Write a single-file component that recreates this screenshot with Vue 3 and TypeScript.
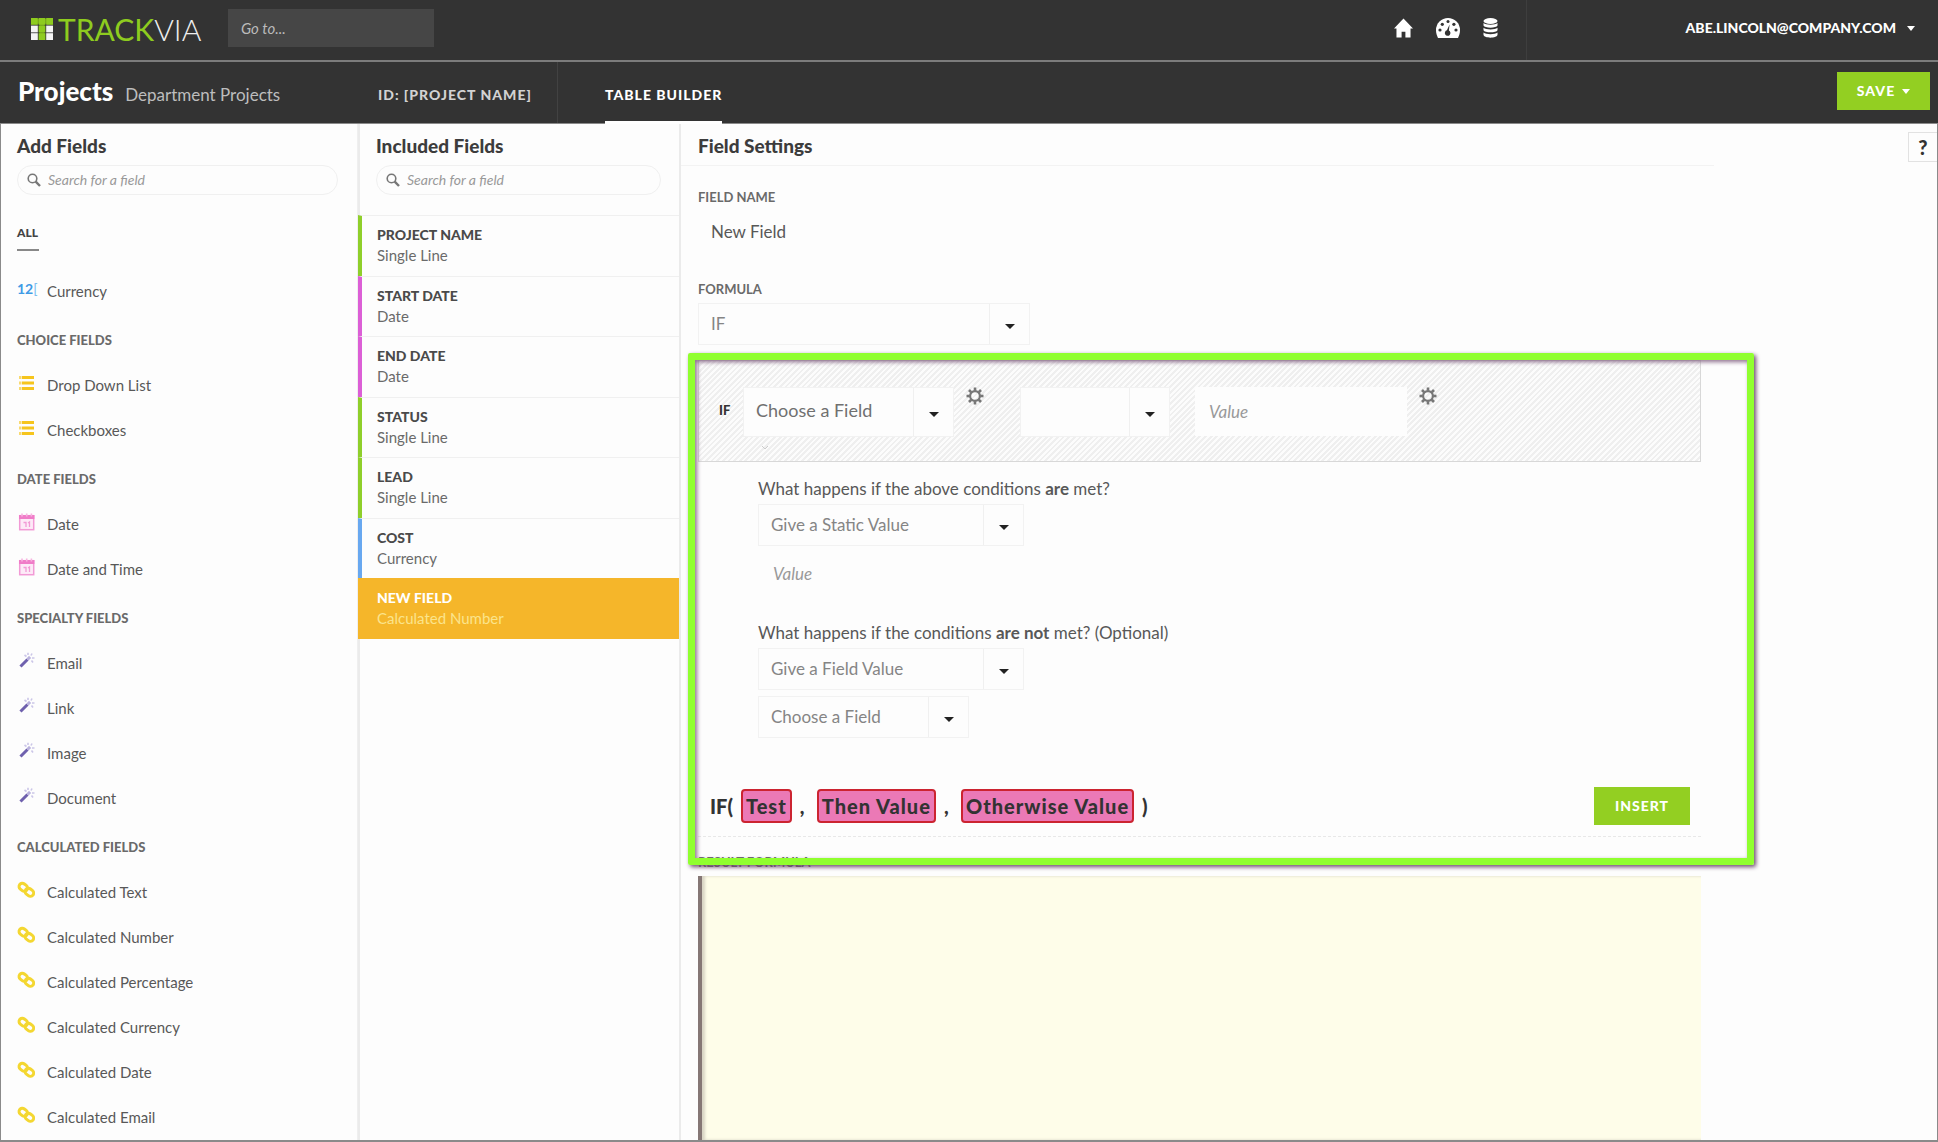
<script setup lang="ts">
import { ref } from 'vue'

type IconName = 'number' | 'list' | 'calendar' | 'wand' | 'link'

interface FieldGroup {
  title: string
  icon: IconName
  items: string[]
}

interface IncludedField {
  name: string
  type: string
  tone: 'green' | 'magenta' | 'blue' | 'active'
}

const groups: FieldGroup[] = [
  { title: 'Choice Fields', icon: 'list', items: ['Drop Down List', 'Checkboxes'] },
  { title: 'Date Fields', icon: 'calendar', items: ['Date', 'Date and Time'] },
  { title: 'Specialty Fields', icon: 'wand', items: ['Email', 'Link', 'Image', 'Document'] },
  {
    title: 'Calculated Fields',
    icon: 'link',
    items: [
      'Calculated Text',
      'Calculated Number',
      'Calculated Percentage',
      'Calculated Currency',
      'Calculated Date',
      'Calculated Email',
    ],
  },
]

const included: IncludedField[] = [
  { name: 'Project Name', type: 'Single Line', tone: 'green' },
  { name: 'Start Date', type: 'Date', tone: 'magenta' },
  { name: 'End Date', type: 'Date', tone: 'magenta' },
  { name: 'Status', type: 'Single Line', tone: 'green' },
  { name: 'Lead', type: 'Single Line', tone: 'green' },
  { name: 'Cost', type: 'Currency', tone: 'blue' },
  { name: 'New Field', type: 'Calculated Number', tone: 'active' },
]

const fieldName = ref('New Field')
const gearTeeth = [0, 45, 90, 135, 180, 225, 270, 315]
</script>

<template>
  <div class="app">
    <header class="topbar">
      <a class="logo" href="#" aria-label="TrackVia">
        <svg class="logo-mark" viewBox="0 0 22 22" aria-hidden="true">
          <path d="M0 3.300H22M11 0V22" stroke="#6a9618" stroke-width="5" />
          <g fill="#8ecb1f">
            <rect x="0" y="0" width="6.800" height="6.800" /><rect x="7.600" y="0" width="6.800" height="6.800" />
            <rect x="15.200" y="0" width="6.800" height="6.800" /><rect x="7.600" y="7.600" width="6.800" height="6.800" />
            <rect x="7.600" y="15.200" width="6.800" height="6.800" />
          </g>
          <g fill="#f4f4f4">
            <rect x="0" y="7.600" width="6.800" height="6.800" /><rect x="15.200" y="7.600" width="6.800" height="6.800" />
            <rect x="0" y="15.200" width="6.800" height="6.800" /><rect x="15.200" y="15.200" width="6.800" height="6.800" />
          </g>
        </svg>
        <span class="logo-track">TRACK</span><span class="logo-via">VIA</span>
      </a>
      <input class="goto" type="text" placeholder="Go to..." aria-label="Go to" />
      <nav class="top-icons" aria-label="Main">
        <a href="#" aria-label="Home">
          <svg width="19" height="20" viewBox="0 0 20 20"><path fill="#fff" d="M10 0 20 10.5h-2.600V20H12v-6H8v6H2.600v-9.500H0L6 4.200z" /></svg>
        </a>
        <a href="#" aria-label="Dashboard">
          <svg width="24" height="20" viewBox="0 0 24 20">
            <path fill="#fff" d="M12 0a12 12 0 0 0-12 12c0 3 .8 5.500 2 8h20c1.200-2.500 2-5 2-8A12 12 0 0 0 12 0z" />
            <g fill="#333">
              <circle cx="4" cy="12" r="1.600" /><circle cx="6.300" cy="6.300" r="1.600" /><circle cx="12" cy="3.600" r="1.500" />
              <circle cx="17.900" cy="6.300" r="1.600" /><circle cx="20" cy="12" r="1.600" />
              <path d="M13.600 6.500 12.900 12.500a2.800 2.800 0 1 1-2-.2z" />
            </g>
          </svg>
        </a>
        <a href="#" aria-label="Data">
          <svg width="15" height="20" viewBox="0 0 15 20">
            <g fill="#fff">
              <ellipse cx="7.500" cy="3" rx="7" ry="3" />
              <path d="M.5 5c2.500 2.200 11.500 2.200 14 0v2.600c-1 2.700-13 2.700-14 0z" />
              <path d="M.5 9.800c2.500 2.200 11.500 2.200 14 0v2.400c-1 2.700-13 2.700-14 0z" />
              <path d="M.5 14.600c2.500 2.200 11.500 2.200 14 0V17c-1 3.500-13 3.500-14 0z" />
            </g>
          </svg>
        </a>
      </nav>
      <button class="account" type="button">ABE.LINCOLN@COMPANY.COM <i class="caret"></i></button>
    </header>

    <div class="subbar">
      <div class="title">
        <h1>Projects</h1>
        <span>Department Projects</span>
      </div>
      <nav class="tabs" aria-label="Table">
        <a class="tab record" href="#">ID: [PROJECT NAME]</a>
        <a class="tab current" href="#">TABLE BUILDER</a>
      </nav>
      <button class="green-button save" type="button">SAVE <i class="caret"></i></button>
    </div>

    <main class="columns">
      <aside class="add-fields">
        <h2>Add Fields</h2>
        <label class="search">
          <svg width="14" height="14" viewBox="0 0 14 14" aria-hidden="true"><circle cx="5.500" cy="5.500" r="4.300" fill="none" stroke="#777" stroke-width="1.600" /><path d="m8.700 8.700 4.300 4.300" stroke="#777" stroke-width="2.400" /></svg>
          <input type="text" placeholder="Search for a field" aria-label="Search fields to add" />
        </label>
        <a class="all" href="#">ALL</a>
        <ul>
          <li><span class="icon-123" aria-hidden="true"><b>12</b>[</span>Currency</li>
        </ul>
        <section v-for="group in groups" :key="group.title">
          <h3>{{ group.title }}</h3>
          <ul>
            <li v-for="item in group.items" :key="item">
              <svg v-if="group.icon === 'list'" class="field-icon" viewBox="0 0 18 18" aria-hidden="true">
                <g fill="#f6c51d"><rect x="5" y="2" width="12" height="3" /><rect x="5" y="7.500" width="12" height="3" /><rect x="5" y="13" width="12" height="3" /></g>
                <g fill="#f9da70"><rect x="2" y="2" width="2.500" height="3" /><rect x="2" y="7.500" width="2.500" height="3" /><rect x="2" y="13" width="2.500" height="3" /></g>
              </svg>
              <svg v-else-if="group.icon === 'calendar'" class="field-icon" viewBox="0 0 18 18" aria-hidden="true">
                <rect x="2.700" y="2.700" width="14" height="14" fill="#fdeaf7" stroke="#f29ad6" stroke-width="1.500" />
                <path d="M2 2h15.400v4H2z" fill="#f07cc8" />
                <path d="M5 .5v3M9.700 .5v3M14.400 .5v3" stroke="#f7b3e0" stroke-width="1.600" />
                <path d="M6.500 9.500H9V14M11 10l1.500-1V14" stroke="#f29ad6" stroke-width="1.300" fill="none" />
              </svg>
              <svg v-else-if="group.icon === 'wand'" class="field-icon" viewBox="0 0 18 18" aria-hidden="true">
                <path d="M3.500 14.500 10.500 7.500" stroke="#6f61ae" stroke-width="3" />
                <path d="m10.500 7.500 2.600-2.600" stroke="#b9b2dd" stroke-width="3" />
                <path d="M7.500 3 9.500 4.500M11 .8V3M15 1.500 14 3.500M14.500 8.500l1.500 2M15 6H17.500" stroke="#cbc6e8" stroke-width="1.600" />
              </svg>
              <svg v-else class="field-icon" viewBox="0 0 18 18" aria-hidden="true">
                <g fill="none" stroke="#f4d731" stroke-width="3">
                  <rect x="-4.500" y="-3.300" width="9" height="6.600" rx="3.300" transform="translate(6.300 6.300) rotate(38)" />
                  <rect x="-4.500" y="-3.300" width="9" height="6.600" rx="3.300" transform="translate(12.400 11.300) rotate(38)" />
                </g>
              </svg>
              {{ item }}
            </li>
          </ul>
        </section>
      </aside>

      <section class="included">
        <div class="included-head">
          <h2>Included Fields</h2>
          <label class="search">
            <svg width="14" height="14" viewBox="0 0 14 14" aria-hidden="true"><circle cx="5.500" cy="5.500" r="4.300" fill="none" stroke="#777" stroke-width="1.600" /><path d="m8.700 8.700 4.300 4.300" stroke="#777" stroke-width="2.400" /></svg>
            <input type="text" placeholder="Search for a field" aria-label="Search included fields" />
          </label>
        </div>
        <ul class="included-list">
          <li v-for="field in included" :key="field.name" :class="field.tone">
            <strong>{{ field.name }}</strong>
            <span>{{ field.type }}</span>
          </li>
        </ul>
      </section>

      <section class="settings">
        <button class="help" type="button" aria-label="Help">?</button>
        <h2>Field Settings</h2>
        <div class="settings-body">
          <label class="caption" for="field-name">FIELD NAME</label>
          <input id="field-name" v-model="fieldName" class="name-input" type="text" />
          <label class="caption" for="formula">FORMULA</label>
          <div class="select formula-select">
            <select id="formula"><option>IF</option></select>
          </div>

          <div class="builder">
            <div class="condition">
              <span class="if">IF</span>
              <div class="select tall choose">
                <select aria-label="Condition field"><option>Choose a Field</option></select>
              </div>
              <button class="gear" type="button" aria-label="Field options">
                <svg width="18" height="18" viewBox="-9 -9 18 18"><circle r="4.900" fill="none" stroke="#777" stroke-width="2.200" /><rect v-for="a in gearTeeth" :key="a" x="-1.300" y="-8.500" width="2.600" height="3.200" fill="#777" :transform="`rotate(${a})`" /></svg>
              </button>
              <div class="select tall operator">
                <select aria-label="Operator"><option></option></select>
              </div>
              <input class="condition-value" type="text" placeholder="Value" aria-label="Condition value" />
              <button class="gear" type="button" aria-label="Value options">
                <svg width="18" height="18" viewBox="-9 -9 18 18"><circle r="4.900" fill="none" stroke="#777" stroke-width="2.200" /><rect v-for="a in gearTeeth" :key="a" x="-1.300" y="-8.500" width="2.600" height="3.200" fill="#777" :transform="`rotate(${a})`" /></svg>
              </button>
              <svg class="chevron" width="8" height="5" viewBox="0 0 8 5" aria-hidden="true"><path d="m1 1 3 3 3-3" fill="none" stroke="#ccc" /></svg>
            </div>

            <div class="outcome">
              <label for="met">What happens if the above conditions <b>are</b> met?</label>
              <div class="select wide"><select id="met"><option>Give a Static Value</option></select></div>
              <input class="plain-value" type="text" placeholder="Value" aria-label="Static value" />
            </div>
            <div class="outcome">
              <label for="unmet">What happens if the conditions <b>are not</b> met? (Optional)</label>
              <div class="select wide"><select id="unmet"><option>Give a Field Value</option></select></div>
              <div class="select choose"><select aria-label="Field value"><option>Choose a Field</option></select></div>
            </div>

            <div class="expression">
              <span>IF(</span>
              <button class="chip" type="button">Test</button>
              <span class="comma">,</span>
              <button class="chip" type="button">Then Value</button>
              <span class="comma">,</span>
              <button class="chip" type="button">Otherwise Value</button>
              <span>)</span>
              <button class="green-button insert" type="button">INSERT</button>
            </div>
            <div class="highlight"></div>
          </div>

          <label class="caption result-caption" for="result-formula">RESULT FORMULA</label>
          <textarea id="result-formula"></textarea>
        </div>
      </section>
    </main>
  </div>
</template>

<style>
body {
  margin: 0;
  background: #fdfdfd;
}
</style>

<style scoped>
* {
  box-sizing: border-box;
}
.app {
  display: flex;
  flex-direction: column;
  min-height: 100vh;
  font: 15px/20px Lato, 'Liberation Sans', sans-serif;
  color: #585858;
  background: #fdfdfd;
}
h1, h2, h3, ul {
  margin: 0;
  padding: 0;
}
ul {
  list-style: none;
}
a {
  color: inherit;
  text-decoration: none;
}
input, select, textarea, button {
  margin: 0;
  padding: 0;
  border: 0;
  border-radius: 0;
  font: inherit;
  color: inherit;
  background: none;
  outline: 0;
}
input::placeholder {
  color: #999;
  font-style: italic;
  opacity: 1;
}
.caret {
  display: inline-block;
  border: 4px solid transparent;
  border-top: 5px solid #fff;
  border-bottom: 0;
}

/* Top bar */
.topbar {
  display: flex;
  align-items: center;
  height: 62px;
  padding-left: 31px;
  background: #333;
  border-bottom: 2px solid #7c7c7c;
}
.logo {
  display: flex;
  align-items: center;
  width: 197px;
  height: 60px;
  padding-bottom: 2px;
  font-size: 30px;
  line-height: 58px;
}
.logo-mark {
  width: 22px;
  height: 22px;
  margin-right: 5px;
}
.logo-track {
  color: #8ecb1f;
}
.logo-via {
  color: #eee;
  font-weight: 300;
}
.goto {
  width: 206px;
  height: 38px;
  margin-bottom: 4px;
  padding: 0 13px;
  background: #464646;
  color: #ddd;
}
.goto::placeholder {
  color: #bbb;
}
.top-icons {
  display: flex;
  align-items: center;
  gap: 23px;
  height: 60px;
  margin-left: auto;
  padding: 0 28px 4px 0;
  border-right: 1px solid #3e3e3e;
}
.top-icons svg {
  display: block;
}
.account {
  display: flex;
  align-items: center;
  justify-content: flex-end;
  gap: 11px;
  width: 411px;
  padding: 0 23px 4px 0;
  color: #fff;
  font-size: 14px;
  font-weight: 900;
}

/* Second bar */
.subbar {
  display: flex;
  height: 62px;
  background: #333;
  border-bottom: 1px solid #8a8a8a;
}
.title {
  display: flex;
  align-items: baseline;
  gap: 12px;
  width: 358px;
  padding-left: 18px;
  color: #bdbdbd;
  font-size: 17px;
  line-height: 58px;
}
.title h1 {
  color: #fff;
  font-size: 26px;
  font-weight: 900;
}
.tabs {
  display: flex;
  gap: 47px;
  font-size: 14px;
  font-weight: 900;
  line-height: 66px;
  letter-spacing: 1px;
}
.record {
  width: 200px;
  padding-left: 20px;
  color: #d2d2d2;
  border-right: 1px solid #424242;
}
.current {
  height: 62px;
  color: #fff;
  border-bottom: 3px solid #fff;
}
.green-button {
  background: #93cf22;
  color: #fff;
  font-size: 14px;
  font-weight: 900;
  letter-spacing: 1px;
}
.save {
  display: flex;
  align-items: center;
  justify-content: center;
  gap: 7px;
  width: 93px;
  height: 38px;
  margin: 10px 8px 0 auto;
}

/* Columns */
.columns {
  display: grid;
  grid-template-columns: 357px 323px 1fr;
  flex: 1;
  border: 1px solid #8a8a8a;
  border-width: 0 1px 2px;
}
h2 {
  color: #3c3c3c;
  font-size: 19px;
  font-weight: 900;
  line-height: 24px;
}
.add-fields {
  padding: 10px 19px 0 16px;
  border-right: 1px solid #efefef;
}
.search {
  display: flex;
  align-items: center;
  gap: 7px;
  height: 30px;
  margin-top: 7px;
  padding-left: 9px;
  border: 1px solid #f0f0f0;
  border-radius: 15px;
}
.search input {
  flex: 1;
  min-width: 0;
  font-size: 14px;
}
.all {
  display: block;
  width: 22px;
  margin: 25px 0 17px;
  padding-bottom: 3px;
  color: #444;
  font-size: 12px;
  font-weight: 900;
  line-height: 26px;
  border-bottom: 2px solid #888;
  white-space: nowrap;
}
h3 {
  margin: 17px 0 12px;
  color: #6a6a6a;
  font-size: 13px;
  font-weight: 900;
  line-height: 20px;
  text-transform: uppercase;
}
.add-fields li {
  display: flex;
  align-items: center;
  gap: 12px;
  height: 45px;
}
.field-icon {
  width: 18px;
  height: 18px;
  margin-bottom: 4px;
}
.icon-123 {
  width: 18px;
  margin-bottom: 4px;
  color: #7cc0f0;
  font-size: 14px;
  line-height: 18px;
}
.icon-123 b {
  color: #3f9be6;
}

.included {
  border-left: 2px solid #ebebeb;
  border-right: 2px solid #ebebeb;
}
.included-head {
  padding: 10px 18px 20px 16px;
}
.included-list {
  display: grid;
  grid-auto-rows: 1fr;
  height: 424px;
  margin-left: -2px;
}
.included-list li {
  display: flex;
  flex-direction: column;
  padding: 9px 0 0 15px;
  border-left: 4px solid;
  border-top: 1px solid #f0f0f0;
}
.included-list strong {
  color: #4a4a4a;
  font-size: 14px;
  font-weight: 900;
  text-transform: uppercase;
}
.included-list span {
  color: #6a6a6a;
  font-size: 15px;
}
.included-list .green {
  border-left-color: #8fcf2b;
}
.included-list .magenta {
  border-left-color: #dc5fd6;
}
.included-list .blue {
  border-left-color: #68a8f0;
}
.included-list .active {
  background: #f5b62a;
  border-color: #f5b62a;
}
.included-list .active strong {
  color: #fff;
}
.included-list .active span {
  color: #fbe48c;
}

/* Settings */
.settings {
  position: relative;
  min-width: 0;
  display: flex;
  flex-direction: column;
}
.settings h2 {
  margin-right: 223px;
  padding: 10px 0 7px 17px;
  border-bottom: 1px solid #f3f3f3;
}
.help {
  position: absolute;
  top: 8px;
  right: 0;
  width: 29px;
  height: 30px;
  border: 1px solid #e2e2e2;
  border-right: 0;
  color: #333;
  font-size: 20px;
  font-weight: 900;
}
.settings-body {
  flex: 1;
  display: flex;
  flex-direction: column;
  align-items: flex-start;
  margin: 21px 236px 0 17px;
}
.caption {
  color: #6a6a6a;
  font-size: 13px;
  font-weight: 700;
}
.name-input {
  width: 332px;
  height: 40px;
  margin: 4px 0 28px;
  padding: 0 13px;
  font-size: 17px;
}
.select {
  position: relative;
  height: 42px;
  border: 1px solid #f2f2f2;
  background: #fdfdfd;
}
.select select {
  appearance: none;
  width: 100%;
  height: 100%;
  padding: 0 40px 0 12px;
  color: #858585;
  font-size: 17px;
}
.select::before {
  content: '';
  position: absolute;
  top: 0;
  bottom: 0;
  right: 39px;
  border-left: 1px solid #f0f0f0;
}
.select::after {
  content: '';
  position: absolute;
  top: 50%;
  right: 14px;
  border: 5px solid transparent;
  border-top: 5px solid #222;
  border-bottom: 0;
  pointer-events: none;
}
.formula-select {
  width: 332px;
  margin-top: 4px;
}
.builder {
  position: relative;
  align-self: stretch;
  margin-top: 15px;
  border-bottom: 1px dashed #e8e8e8;
}
.condition {
  position: relative;
  display: flex;
  align-items: flex-start;
  height: 102px;
  padding: 26px 0 0 20px;
  border: 1px solid #d8d8d8;
  background: repeating-linear-gradient(-45deg, #fcfcfc 0 2px, #efefef 2px 4px);
}
.if {
  width: 24px;
  color: #333;
  font-size: 13px;
  font-weight: 900;
  line-height: 46px;
}
.choose {
  width: 211px;
}
.tall {
  height: 50px;
}
.tall select {
  padding-bottom: 4px;
  color: #707070;
  font-size: 18px;
}
.operator {
  width: 150px;
}
.gear {
  width: 18px;
  height: 18px;
  margin: 0 36px 0 12px;
}
.gear svg {
  display: block;
}
.condition-value {
  width: 212px;
  height: 49px;
  margin-left: 25px;
  padding: 0 14px;
  background: #fdfdfd;
  font-size: 17px;
}
.chevron {
  position: absolute;
  left: 62px;
  bottom: 11px;
}
.outcome {
  display: flex;
  flex-direction: column;
  align-items: flex-start;
  height: 144px;
  padding: 17px 0 0 60px;
  font-size: 17px;
}
.outcome .wide {
  width: 266px;
  margin: 5px 0 6px;
}
.plain-value {
  height: 42px;
  padding: 0 15px;
}
.expression {
  display: flex;
  align-items: center;
  height: 86px;
  padding: 26px 11px 0 12px;
  color: #333;
  font-size: 20px;
  font-weight: 900;
}
.expression .chip {
  height: 34px;
  margin: 0 8px;
  padding: 0 3px;
  border: 2px solid #cc2431;
  border-radius: 4px;
  background: #eb79b6;
  letter-spacing: 1px;
}
.comma {
  width: 9px;
}
.insert {
  width: 96px;
  height: 38px;
  margin-left: auto;
}
.highlight {
  position: absolute;
  inset: -7px -53px -29px -10px;
  border: 7px solid #90ff2f;
  border-radius: 2px;
  box-shadow: 2px 2px 4px #6d4a6d, inset 2px 2px 4px #8d6f8d;
  pointer-events: none;
}
.result-caption {
  margin-top: 15px;
}
textarea {
  flex: 1;
  width: 100%;
  min-height: 260px;
  margin-top: 4px;
  border-left: 4px solid #857775;
  background: #fefde9;
  box-shadow: inset 3px 0 3px #d8d4c4;
  resize: none;
}
</style>
